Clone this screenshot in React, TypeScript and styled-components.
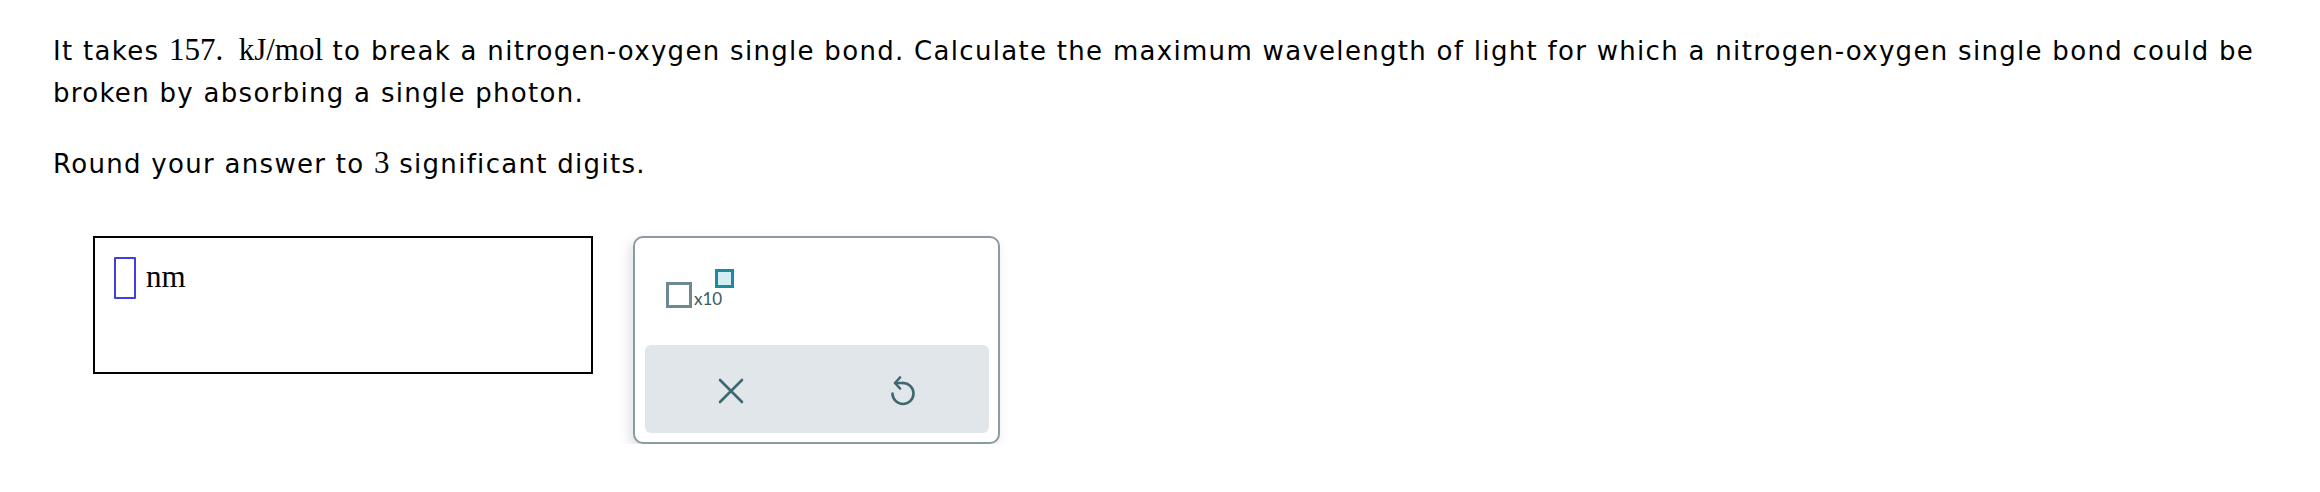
import React from "react";
import styled, { createGlobalStyle } from "styled-components";

const GlobalStyle = createGlobalStyle`
    html, body {
        margin: 0;
        padding: 0;
        background: #ffffff;
    }
`;

const Page = styled.div`
    padding: 30px 40px 0 53px;
    font-family: "DejaVu Sans", Verdana, sans-serif;
    font-size: 26px;
    line-height: 42px;
    letter-spacing: 1.3px;
    color: #000;
`;

const Paragraph = styled.p<{ $gap?: number }>`
    margin: 0 0 ${(p) => p.$gap ?? 0}px 0;
`;

const MathText = styled.span`
    font-family: "Liberation Serif", "Times New Roman", serif;
    font-size: 31px;
    line-height: 1;
    letter-spacing: 0;
`;

const AnswerRow = styled.div`
    display: flex;
    align-items: flex-start;
    gap: 40px;
    padding-left: 40px;
    letter-spacing: 0;
`;

const AnswerBox = styled.div`
    box-sizing: border-box;
    width: 500px;
    height: 138px;
    border: 2px solid #000;
    padding: 19px 19px;
    display: flex;
    align-items: flex-start;
    gap: 10px;
`;

const Placeholder = styled.div`
    box-sizing: border-box;
    width: 22px;
    height: 42px;
    border: 2px solid #4040e0;
    border-radius: 1px;
`;

const Unit = styled.span`
    font-family: "Liberation Serif", "Times New Roman", serif;
    font-size: 31px;
    line-height: 36px;
    margin-top: 2px;
`;

const Keypad = styled.div`
    box-sizing: border-box;
    width: 367px;
    height: 208px;
    border: 2px solid #8a9ca1;
    border-radius: 10px;
    background: #fff;
    box-shadow: -3px 5px 12px rgba(60, 80, 90, 0.18);
    padding: 0 9px 9px 10px;
    display: flex;
    flex-direction: column;
`;

const TemplateArea = styled.div`
    box-sizing: border-box;
    height: 107px;
    padding: 31px 0 0 21px;
`;

const TemplateKey = styled.div`
    display: inline-flex;
    align-items: flex-end;
    height: 39px;
`;

const Slot = styled.div<{ $exp?: boolean }>`
    box-sizing: border-box;
    width: ${(p) => (p.$exp ? 19 : 26)}px;
    height: ${(p) => (p.$exp ? 19 : 26)}px;
    border: 3px solid ${(p) => (p.$exp ? "#1b8c9c" : "#6f8990")};
    background: ${(p) => (p.$exp ? "#d4edf3" : "#fff")};
    align-self: ${(p) => (p.$exp ? "flex-start" : "flex-end")};
    margin-left: ${(p) => (p.$exp ? -7 : 0)}px;
`;

const TimesTen = styled.span`
    font-family: Lato, "Open Sans", sans-serif;
    font-size: 17px;
    line-height: 17px;
    color: #3d5860;
    margin-left: 2px;
    padding-bottom: 1px;
`;

const ActionBar = styled.div`
    flex: 1;
    display: flex;
    background: #e1e6ea;
    border-radius: 6px;
`;

const ActionButton = styled.button`
    flex: 1;
    border: none;
    background: transparent;
    display: flex;
    align-items: center;
    justify-content: center;
    padding: 4px 0 0 0;
    cursor: pointer;
`;

const ClearIcon = () => (
    <svg width="26" height="26" viewBox="0 0 26 26" fill="none">
        <path d="M2 2 L24 24 M24 2 L2 24" stroke="#3d6870" strokeWidth="2.6" strokeLinecap="round" />
    </svg>
);

const UndoIcon = () => (
    <svg width="30" height="30" viewBox="0 0 30 30" fill="none">
        <path d="M15 7 A10.5 10.5 0 1 1 4.5 17.5" stroke="#3d6870" strokeWidth="2.6" strokeLinecap="round" />
        <path d="M12 1.5 L7 7 L12 12.5" stroke="#3d6870" strokeWidth="2.6" strokeLinecap="round" strokeLinejoin="round" />
        <path d="M7.5 7 H15" stroke="#3d6870" strokeWidth="2.6" strokeLinecap="round" />
    </svg>
);

export default function App() {
    return (
        <>
            <GlobalStyle />
            <Page>
                <Paragraph $gap={29}>
                    It takes <MathText>157.&nbsp; kJ/mol</MathText> to break a nitrogen-oxygen single bond. Calculate the maximum wavelength of light for which a nitrogen-oxygen single bond could be broken by absorbing a single photon.
                </Paragraph>
                <Paragraph $gap={51}>
                    Round your answer to <MathText>3</MathText> significant digits.
                </Paragraph>
                <AnswerRow>
                    <AnswerBox>
                        <Placeholder />
                        <Unit>nm</Unit>
                    </AnswerBox>
                    <Keypad>
                        <TemplateArea>
                            <TemplateKey>
                                <Slot />
                                <TimesTen>x10</TimesTen>
                                <Slot $exp />
                            </TemplateKey>
                        </TemplateArea>
                        <ActionBar>
                            <ActionButton aria-label="clear">
                                <ClearIcon />
                            </ActionButton>
                            <ActionButton aria-label="undo">
                                <UndoIcon />
                            </ActionButton>
                        </ActionBar>
                    </Keypad>
                </AnswerRow>
            </Page>
        </>
    );
}
